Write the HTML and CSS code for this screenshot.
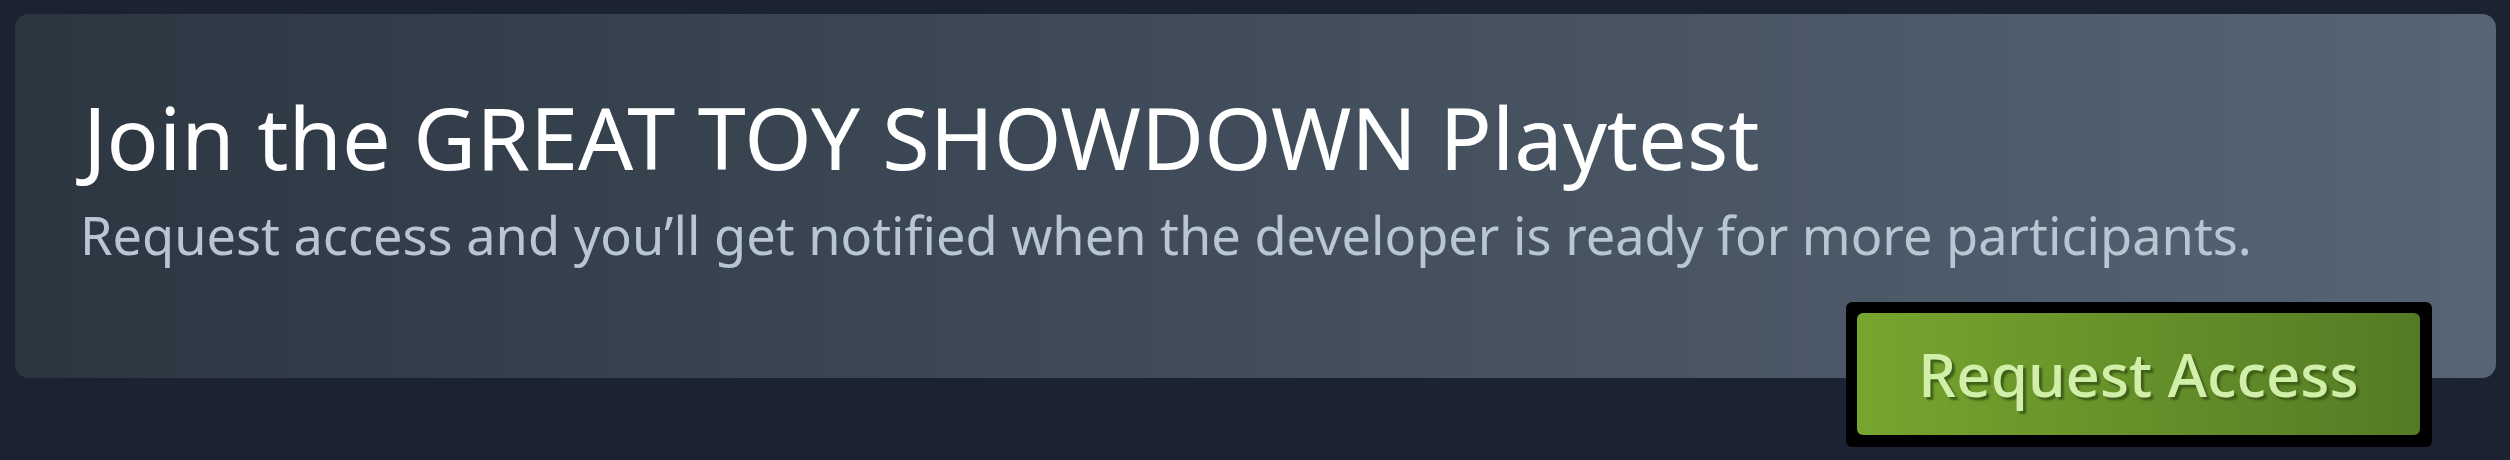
FILE: index.html
```html
<!DOCTYPE html>
<html lang="en">

<head>
    <meta charset="UTF-8">
    <meta name="viewport" content="width=device-width, initial-scale=1.0">
    <title>Playtest</title>
    <link rel="stylesheet" href="styles.css">
</head>

<body>
    <div class="playtest">
        <div class="playtest-box">
            <h2 class="playtest-title">Join the GREAT TOY SHOWDOWN Playtest</h2>
            <p class="playtest-desc">Request access and you’ll get notified when the developer is ready for more participants.</p>
        </div>
        <!-- 按钮压在面板底边上 -->
        <div class="request-btn">
            <span class="request-text">Request Access</span>
        </div>
    </div>
</body>

</html>
```

FILE: styles.css
```css
* {
    margin: 0;
    padding: 0;
}

body {
    background-color: #1b2231;
    font-family: "Noto Sans", "Open Sans", sans-serif;
    height: 460px;
    overflow: hidden;
}

.playtest {
    position: relative;
    padding: 14px 14px 0 15px;
}

.playtest-box {
    height: 364px;
    box-sizing: border-box;
    padding: 73px 0 0 68px;
    border-radius: 14px;
    background: linear-gradient(to right, #2b3641, #576474);
}

.playtest-title {
    font-size: 86.5px;
    font-weight: normal;
    line-height: 100px;
    color: #ffffff;
    white-space: nowrap;
}

.playtest-desc {
    margin-top: 16px;
    margin-left: -3px;
    font-size: 52.3px;
    line-height: 64px;
    color: #b8c6d4;
    white-space: nowrap;
}

.request-btn {
    position: absolute;
    left: 1846px;
    top: 302px;
    width: 586px;
    height: 145px;
    box-sizing: border-box;
    padding: 11px 12px 12px 11px;
    background-color: #000;
    border-radius: 6px;
}

.request-text {
    display: flex;
    align-items: center;
    justify-content: center;
    height: 100%;
    border-radius: 6px;
    background: linear-gradient(to right, #77a52f, #547b24);
    font-size: 60px;
    font-weight: 500;
    color: #d2efa9;
    white-space: nowrap;
    text-shadow: 3px 3px 2px #3f5f18;
}
```
